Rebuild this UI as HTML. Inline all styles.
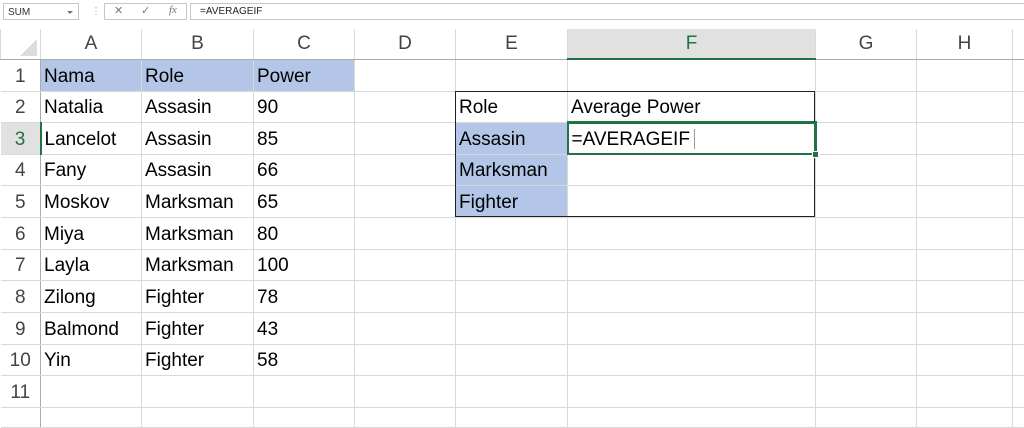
<!DOCTYPE html>
<html><head><style>
body{margin:0;width:1024px;height:414px;overflow:hidden;background:#fff;font-family:"Liberation Sans",sans-serif;position:relative}
.fb{position:absolute;left:0;top:0;width:1024px;height:26px;background:#fff}
.nb{position:absolute;left:3px;top:3px;width:76px;height:17px;border:1px solid #c6c6c6;font-size:10px;line-height:17px;padding-left:4px;box-sizing:border-box;color:#333}
.nb:after{content:"";position:absolute;right:5px;top:7px;border-left:3px solid transparent;border-right:3px solid transparent;border-top:3px solid #777}
.ic{position:absolute;left:104px;top:3px;width:83px;height:17px;border:1px solid #c6c6c6;box-sizing:border-box;color:#777;font-size:11px}
.fx{position:absolute;left:190px;top:3px;width:840px;height:17px;border:1px solid #c6c6c6;box-sizing:border-box;font-size:10px;line-height:15px;padding-left:9px;color:#222}
table{position:absolute;left:0;top:29px;border-collapse:collapse;table-layout:fixed;font-size:19px;width:1052px}
td{border:1px solid #d9d9d9;padding:3px 0 0 3px;white-space:nowrap;overflow:hidden;color:#000}
tr.h td{height:29px;text-align:center;color:#444;font-size:19px;padding:0;border-bottom:1px solid #ababab;border-top:none}
td.r{text-align:center;color:#444;padding:3px 0 0 0;border-right:1px solid #ababab;border-left:none}
.b{background:#b4c6e7}
.sel{background:#e1e1e1!important;color:#217346!important}
</style></head><body>
<div class="fb">
<div class="nb">SUM</div>
<div style="position:absolute;left:91px;top:6px;color:#aaa;font-size:10px">⋮</div>
<div class="ic"><span style="position:absolute;left:9px;top:0">✕</span><span style="position:absolute;left:36px;top:0">✓</span><span style="position:absolute;left:64px;top:0;font-style:italic;font-family:'Liberation Serif',serif">fx</span></div>
<div class="fx">=AVERAGEIF</div>
</div>
<table>
<colgroup><col style="width:40px"><col style="width:101px"><col style="width:112px"><col style="width:101px"><col style="width:101px"><col style="width:112px"><col style="width:248px"><col style="width:101px"><col style="width:96px"><col style="width:40px"></colgroup>
<tr class="h"><td style="background:#fff;position:relative"><div style="position:absolute;right:3px;bottom:3px;width:0;height:0;border-left:17px solid transparent;border-bottom:17px solid #dcdcdc"></div></td><td>A</td><td>B</td><td>C</td><td>D</td><td>E</td><td class="sel" style="border-bottom:2px solid #217346">F</td><td>G</td><td>H</td><td></td></tr>
<tr style="height:32px"><td class="r">1</td><td class="b">Nama</td><td class="b">Role</td><td class="b">Power</td><td></td><td></td><td></td><td></td><td></td><td></td></tr>
<tr style="height:31px"><td class="r">2</td><td>Natalia</td><td>Assasin</td><td>90</td><td></td><td>Role</td><td>Average Power</td><td></td><td></td><td></td></tr>
<tr style="height:32px"><td class="r sel" style="border-right:2px solid #217346">3</td><td>Lancelot</td><td>Assasin</td><td>85</td><td></td><td class="b">Assasin</td><td style="border:2px solid #217346">=AVERAGEIF<span style="display:inline-block;width:1px;height:20px;background:#999;vertical-align:middle;margin-left:4px"></span></td><td></td><td></td><td></td></tr>
<tr style="height:31px"><td class="r">4</td><td>Fany</td><td>Assasin</td><td>66</td><td></td><td class="b">Marksman</td><td></td><td></td><td></td><td></td></tr>
<tr style="height:32px"><td class="r">5</td><td>Moskov</td><td>Marksman</td><td>65</td><td></td><td class="b">Fighter</td><td></td><td></td><td></td><td></td></tr>
<tr style="height:32px"><td class="r">6</td><td>Miya</td><td>Marksman</td><td>80</td><td></td><td></td><td></td><td></td><td></td><td></td></tr>
<tr style="height:31px"><td class="r">7</td><td>Layla</td><td>Marksman</td><td>100</td><td></td><td></td><td></td><td></td><td></td><td></td></tr>
<tr style="height:32px"><td class="r">8</td><td>Zilong</td><td>Fighter</td><td>78</td><td></td><td></td><td></td><td></td><td></td><td></td></tr>
<tr style="height:32px"><td class="r">9</td><td>Balmond</td><td>Fighter</td><td>43</td><td></td><td></td><td></td><td></td><td></td><td></td></tr>
<tr style="height:31px"><td class="r">10</td><td>Yin</td><td>Fighter</td><td>58</td><td></td><td></td><td></td><td></td><td></td><td></td></tr>
<tr style="height:32px"><td class="r">11</td><td></td><td></td><td></td><td></td><td></td><td></td><td></td><td></td><td></td></tr>
<tr style="height:20px"><td class="r"></td><td></td><td></td><td></td><td></td><td></td><td></td><td></td><td></td><td></td></tr>
</table>
<div style="position:absolute;left:455px;top:91px;width:360px;height:126px;border:1px solid #222;box-sizing:border-box"></div>
<div style="position:absolute;left:567px;top:122px;width:249px;height:33px;border:2px solid #217346;box-sizing:border-box"></div>
<div style="position:absolute;left:812px;top:151px;width:5px;height:5px;background:#217346;border:1px solid #fff"></div>
</body></html>
